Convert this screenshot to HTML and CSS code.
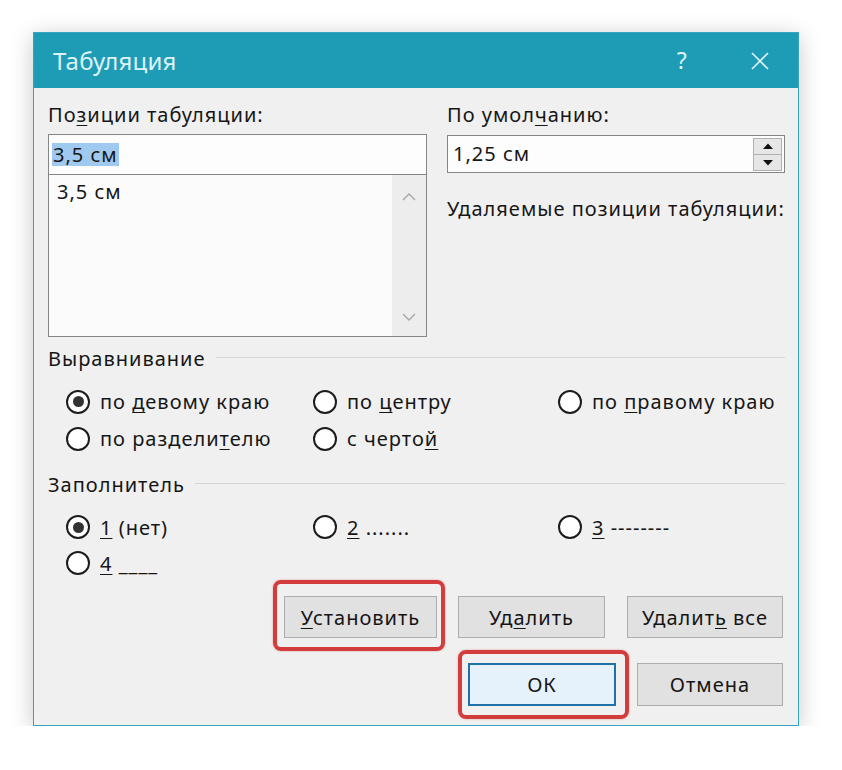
FILE: index.html
```html
<!DOCTYPE html>
<html lang="ru">
<head>
<meta charset="utf-8">
<title>Табуляция</title>
<link rel="stylesheet" href="styles.css">
</head>
<body>
<div class="dialog">
  <div class="titlebar">
    <span class="title">Табуляция</span>
    <span class="help">?</span>
    <svg class="close" width="20" height="18" viewBox="0 0 20 18"><path d="M2 1 L18 17 M18 1 L2 17" stroke="#dff4f8" stroke-width="1.6" fill="none"/></svg>
  </div>
  <div class="content">
    <div class="top">
      <div class="col">
        <div class="label">По<u>з</u>иции табуляции:</div>
        <div class="combo">
          <div class="edit"><span class="sel">3,5 см</span></div>
          <div class="list">
            <div class="items">3,5 см</div>
            <div class="scroll">
              <svg width="16" height="10" viewBox="0 0 16 10"><path d="M2 8 L8 2 L14 8" stroke="#a6a6a6" stroke-width="1.4" fill="none"/></svg>
              <svg width="16" height="10" viewBox="0 0 16 10"><path d="M2 2 L8 8 L14 2" stroke="#a6a6a6" stroke-width="1.4" fill="none"/></svg>
            </div>
          </div>
        </div>
      </div>
      <div class="col">
        <div class="label">По умол<u>ч</u>анию:</div>
        <div class="spin">
          <span class="spin-text">1,25 см</span>
          <div class="spin-btns">
            <div class="sb"><svg width="10" height="7" viewBox="0 0 10 7"><path d="M0 6 L5 0.5 L10 6 Z" fill="#111"/></svg></div>
            <div class="sb"><svg width="10" height="7" viewBox="0 0 10 7"><path d="M0 1 L5 6.5 L10 1 Z" fill="#111"/></svg></div>
          </div>
        </div>
        <div class="label label2">Удаляемые позиции табуляции:</div>
      </div>
    </div>

    <div class="group-head"><span>Выравнивание</span><div class="rule"></div></div>
    <div class="radios align">
      <div class="opt"><span class="radio checked"></span><span>по <u>д</u>евому краю</span></div>
      <div class="opt"><span class="radio"></span><span>по <u>ц</u>ентру</span></div>
      <div class="opt"><span class="radio"></span><span>по <u>п</u>равому краю</span></div>
      <div class="opt"><span class="radio"></span><span>по раздели<u>т</u>елю</span></div>
      <div class="opt"><span class="radio"></span><span>с черто<u>й</u></span></div>
    </div>

    <div class="group-head group-fill"><span>Заполнитель</span><div class="rule"></div></div>
    <div class="radios fill">
      <div class="opt"><span class="radio checked"></span><span><u>1</u> (нет)</span></div>
      <div class="opt"><span class="radio"></span><span><u>2</u> .......</span></div>
      <div class="opt"><span class="radio"></span><span><u>3</u> --------</span></div>
      <div class="opt"><span class="radio"></span><span><u>4</u> ____</span></div>
    </div>

    <div class="btn-row row1">
      <div class="btn-wrap"><button class="btn w-set"><u>У</u>становить</button><span class="mark mark-set"></span></div>
      <button class="btn w-del">Уд<u>а</u>лить</button>
      <button class="btn w-delall">Удалит<u>ь</u> все</button>
    </div>
    <div class="btn-row row2">
      <div class="btn-wrap"><button class="btn btn-ok">ОК</button><span class="mark mark-ok"></span></div>
      <button class="btn w-cancel">Отмена</button>
    </div>
  </div>
</div>
</body>
</html>
```
FILE: styles.css
```css
html, body {
  margin: 0;
  padding: 0;
  background: #ffffff;
}
body {
  font-family: "Noto Sans", "Open Sans", sans-serif;
  color: #161616;
  font-size: 20px;
  letter-spacing: 1px;
}
u {
  text-decoration: underline;
  text-underline-offset: 3px;
  text-decoration-thickness: 1px;
}
.dialog {
  box-sizing: border-box;
  width: 766px;
  margin: 32px 0 0 33px;
  border: 1px solid #34a6be;
  background: #f0f0f0;
  box-shadow: 0 4px 22px rgba(0, 0, 0, 0.22);
}
.titlebar {
  height: 55px;
  background: #1e9cb6;
  display: flex;
  align-items: center;
  padding-left: 19px;
  color: #dcf3f8;
  letter-spacing: 0.2px;
}
.title {
  font-size: 24px;
  line-height: 55px;
  flex: 1;
}
.help {
  font-size: 23px;
  line-height: 55px;
  margin-right: 63px;
}
.close {
  margin-right: 28px;
  margin-top: 1px;
}
.content {
  padding: 15px 13px 19px 14px;
}
.label {
  line-height: 24px;
  white-space: nowrap;
}
.top {
  display: grid;
  grid-template-columns: 379px 338px;
  column-gap: 20px;
}
.combo {
  margin-top: 7px;
  border: 1px solid #858585;
  background: #fbfbfb;
}
.edit {
  height: 39px;
  border-bottom: 1px solid #858585;
  background: #fdfdfd;
  display: flex;
  align-items: center;
  padding-left: 3px;
}
.sel {
  background: #9fc9ee;
  line-height: 23px;
  padding: 0 1px;
}
.list {
  height: 161px;
  display: flex;
}
.items {
  flex: 1;
  padding: 5px 0 0 8px;
  line-height: 24px;
}
.scroll {
  width: 34px;
  background: #ededed;
  display: flex;
  flex-direction: column;
  justify-content: space-between;
  align-items: center;
  padding: 17px 0 14px;
}
.spin {
  margin-top: 8px;
  height: 36px;
  border: 1px solid #858585;
  background: #fdfdfd;
  display: flex;
  align-items: center;
  padding-left: 5px;
}
.spin-text {
  flex: 1;
  line-height: 24px;
}
.spin-btns {
  width: 29px;
  height: 33px;
  margin-right: 2px;
  display: flex;
  flex-direction: column;
}
.sb {
  flex: 1;
  background: #e6e6e6;
  border: 1px solid #b0b0b0;
  display: flex;
  align-items: center;
  justify-content: center;
}
.sb + .sb {
  border-top: none;
}
.label2 {
  margin-top: 24px;
}
.group-head {
  margin-top: 10px;
  display: flex;
  line-height: 24px;
}
.group-fill {
  margin-top: 16px;
}
.rule {
  flex: 1;
  height: 1px;
  background: #d6d6d6;
  margin: 10px 0 0 10px;
}
.radios {
  margin-top: 12px;
  padding-left: 18px;
  display: grid;
  grid-template-columns: 247px 245px 1fr;
  grid-auto-rows: 37px;
}
.fill {
  grid-auto-rows: 36px;
}
.opt {
  display: flex;
  align-items: center;
  gap: 10px;
  white-space: nowrap;
}
.radio {
  box-sizing: border-box;
  width: 24px;
  height: 24px;
  border: 2px solid #1c1c1c;
  border-radius: 50%;
  background: #ffffff;
  display: flex;
  align-items: center;
  justify-content: center;
}
.radio.checked::after {
  content: "";
  width: 11px;
  height: 11px;
  border-radius: 50%;
  background: #333333;
}
.btn-row {
  display: flex;
  justify-content: flex-end;
  padding-right: 2px;
}
.row1 {
  margin-top: 15px;
  gap: 21px;
}
.row2 {
  margin-top: 25px;
  gap: 21px;
}
.btn-wrap {
  position: relative;
  display: flex;
}
.btn {
  font-family: inherit;
  font-size: 20px;
  letter-spacing: 1px;
  color: #141414;
  background: #e1e1e1;
  border: 1px solid #adadad;
  padding: 0;
  margin: 0;
  height: 42px;
}
.w-set { width: 153px; }
.w-del { width: 147px; }
.w-delall { width: 156px; margin-left: 1px; }
.row2 .btn { height: 43px; }
.btn-ok {
  width: 148px;
  background: #e5f1fb;
  border: 2px solid #1f6fa8;
}
.w-cancel { width: 146px; }
.mark {
  position: absolute;
  border: 4px solid #d33c3c;
  border-radius: 8px;
  box-shadow: 0 0 2px rgba(211, 60, 60, 0.5);
  pointer-events: none;
}
.mark-set {
  top: -16px;
  right: -8px;
  bottom: -13px;
  left: -11px;
}
.mark-ok {
  top: -13px;
  right: -13px;
  bottom: -13px;
  left: -10px;
}
```
